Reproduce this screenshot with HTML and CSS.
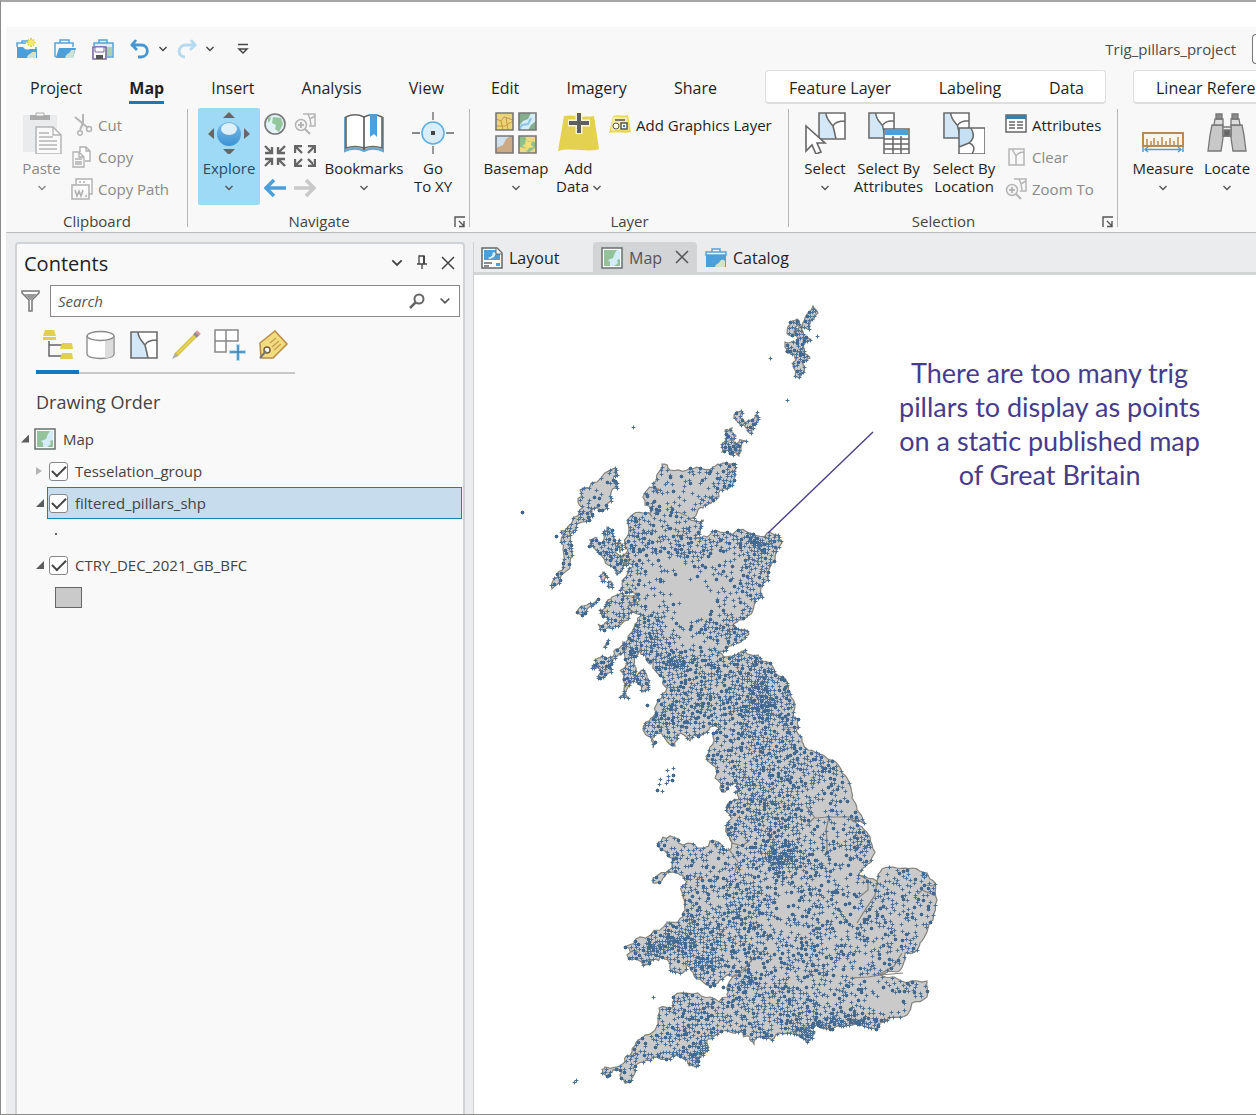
FILE: index.html
```html
<!DOCTYPE html>
<html lang="en">
<head>
<meta charset="utf-8">
<title>Trig_pillars_project</title>
<link rel="stylesheet" href="styles.css">
</head>
<body>
<svg class="defs" aria-hidden="true">
  <symbol id="chev" viewBox="0 0 8 6"><path d="M.5 1l3.500 3.500L7.500 1" fill="none" stroke="currentColor" stroke-width="1.400"/></symbol>
  <symbol id="patch" viewBox="0 0 28 28"><path d="M1 1h26v26H1z" fill="#fff"/><path d="M1 1h7c0 6 4 9 7 13 1 4 2 8 2 13H1z" fill="#d3e7f6"/><path d="M8 1c0 6 4 9 7 13 1 4 2 8 3 13M15 14c2-4 6-5 12-5M1 1h26v26H1z" fill="none" stroke="#6b6b6b" stroke-width="1.600"/></symbol>
  <symbol id="maptile" viewBox="0 0 22 22"><path d="M1 1h20v20H1z" fill="#fff" stroke="#66706c" stroke-width="1.500"/><path d="M3 3h16v16H3z" fill="#94c29a"/><path d="M19 3v9l-3 1 1 3-4 3H9v-4l-2-2 5-2 2-5 2-3z" fill="#d4ecf7"/></symbol>
  <symbol id="case" viewBox="0 0 22 20"><path d="M7 4V1h8v3M1 4h20v3H1z" fill="#eef6fb" stroke="#5aa3d3" stroke-width="1.500"/><path d="M1 7h20v12H1z" fill="#4c9fd8"/><path d="M10 19c1-4 4-3 5-6 2-2 4-1 5 0v6z" fill="#cfe5c6"/></symbol>
  <symbol id="magtile" viewBox="0 0 22 22"><path d="M9 1h12v12h-6M14 1l2 5 5-3M16 6l1 6" fill="none" stroke="#b5b5b5" stroke-width="1.500"/><circle cx="7" cy="12" r="5.500" fill="#f5f5f5" stroke="#b5b5b5" stroke-width="1.500"/><path d="M7 9v6M4 12h6M11 16l5 5" stroke="#b5b5b5" stroke-width="2"/></symbol>
  <symbol id="launch" viewBox="0 0 12 12"><path d="M1 11V1h10M5 5l5 5M10 5v5.500H5" fill="none" stroke="#555" stroke-width="1.400"/></symbol>
  <symbol id="x" viewBox="0 0 14 14"><path d="M1 1l12 12M13 1L1 13" stroke="currentColor" stroke-width="1.500"/></symbol>
</svg>

<div class="app">
  <header class="ribbon">
    <div class="quick">
      <button aria-label="New project"><svg width="22" height="22" viewBox="0 0 22 22"><path d="M6 5V3h6M1 9V5h9M20 9v2" fill="none" stroke="#5aa3d3" stroke-width="1.500"/><path d="M1 9h6c2 3 5 3 7 2h7v9H1z" fill="#4c9fd8"/><path d="M11 20c1-5 3-3 5-6h4v6z" fill="#cfe3d0"/><path d="M15 0v9M10.500 4.500h9M12 1.500l6 6M18 1.500l-6 6" stroke="#dcc940" stroke-width="1.500"/><circle cx="15" cy="4.500" r="2.600" fill="#f3e779"/></svg></button>
      <button aria-label="Open project"><svg width="22" height="22" viewBox="0 0 22 22"><path d="M6 5V2h9v3M1 19V5h18v4" fill="none" stroke="#5aa3d3" stroke-width="1.500"/><path d="M2 19l3-9h17l-3 10H1z" fill="#4c9fd8"/><path d="M11 20c1-5 5-4 6-8h4l-2 8z" fill="#cfe3d0"/></svg></button>
      <button aria-label="Save project"><svg width="22" height="22" viewBox="0 0 22 22"><path d="M7 5V2h8v3M2 8V5h19v14h-6" fill="#dceef8" stroke="#5aa3d3" stroke-width="1.500"/><path d="M14 9h6v9h-6z" fill="#a8cfb6"/><path d="M1 9h13v12H1z" fill="#fff" stroke="#7d68a6" stroke-width="1.600"/><path d="M3 9h9v5H3z" fill="#fff" stroke="#7d68a6"/><path d="M4 17h7v4H4z" fill="#555"/></svg></button>
      <button aria-label="Undo"><svg width="20" height="20" viewBox="0 0 20 20"><path d="M6 1L2 6l5 5M1 6h10c9 0 8 12 0 12H8" fill="none" stroke="#4696d2" stroke-width="2.800"/></svg></button>
      <button class="drop" aria-label="Undo list"><svg width="8" height="6"><use href="#chev"/></svg></button>
      <button aria-label="Redo"><svg width="20" height="20" viewBox="0 0 20 20"><path d="M14 1l4 5-5 5M19 6H9C0 6 0 18 8 18" fill="none" stroke="#b5d9ee" stroke-width="2.800"/></svg></button>
      <button class="drop" aria-label="Redo list"><svg width="8" height="6"><use href="#chev"/></svg></button>
      <button class="custom" aria-label="Customize"><svg width="12" height="12" viewBox="0 0 12 12"><path d="M1 1.500h10M2 6h8l-4 4z" fill="none" stroke="#444" stroke-width="1.500"/></svg></button>
      <span class="project">Trig_pillars_project</span>
      <input class="command" aria-label="Command search">
    </div>

    <nav class="tabs">
      <div class="main-tabs">
        <a href="#">Project</a><a href="#" class="on">Map</a><a href="#">Insert</a><a href="#">Analysis</a><a href="#">View</a><a href="#">Edit</a><a href="#">Imagery</a><a href="#">Share</a>
      </div>
      <div class="context feature"><a href="#">Feature Layer</a><a href="#">Labeling</a><a href="#">Data</a></div>
      <div class="context linear"><a href="#">Linear Referencing</a></div>
    </nav>

    <div class="groups">
      <section class="group clipboard">
        <div class="tools">
          <button class="big off"><svg width="42" height="42" viewBox="0 0 42 42"><path d="M2 3h34v37H2z" fill="#e9ebec"/><path d="M9 3h20v5H9z" fill="#ababab"/><path d="M15 1h8v3h-8z" fill="#fff" stroke="#ababab"/><path d="M15 15h17l8 8v19H15z" fill="#fafafa" stroke="#b5b5b5" stroke-width="1.500"/><path d="M32 15v8h8M18 21h10M18 25h14M18 29h18M18 33h18M18 37h18" fill="none" stroke="#b5b5b5" stroke-width="1.300"/></svg><span>Paste</span><svg width="8" height="6"><use href="#chev"/></svg></button>
          <div class="stack">
            <button class="small off"><svg width="22" height="22" viewBox="0 0 22 22"><path d="M4 3l13 11M12 0v9L9 16" fill="none" stroke="#b5b5b5" stroke-width="2"/><circle cx="18" cy="15" r="2.500" fill="none" stroke="#b5b5b5" stroke-width="1.500"/><circle cx="9" cy="19" r="2.300" fill="none" stroke="#b5b5b5" stroke-width="1.500"/></svg><span>Cut</span></button>
            <button class="small off"><svg width="22" height="22" viewBox="0 0 22 22"><path d="M9 6V1h6l4 4v10h-5" fill="#fff" stroke="#b0b0b0" stroke-width="1.400"/><path d="M2 6h6l5 5v10H2zM8 6v5h5M4 13h7M4 16h7M4 18h7M15 1v4h4" fill="none" stroke="#b0b0b0" stroke-width="1.300"/></svg><span>Copy</span></button>
            <button class="small off"><svg width="22" height="22" viewBox="0 0 22 22"><path d="M5 7V1h16v15h-3" fill="#fff" stroke="#b0b0b0" stroke-width="1.400"/><path d="M1 7h17v14H1zM4 12l2 6 2-5 2 5 2-6M14 18h2M8 4h2M12 4h2" fill="none" stroke="#b0b0b0" stroke-width="1.500"/></svg><span>Copy Path</span></button>
          </div>
        </div>
        <h2>Clipboard</h2>
      </section>

      <section class="group navigate">
        <div class="tools">
          <button class="big explore"><svg width="42" height="42" viewBox="0 0 42 42"><defs><linearGradient id="ball" x2="0" y2="1"><stop stop-color="#79bce8"/><stop offset="1" stop-color="#3c93d4"/></linearGradient></defs><circle cx="21" cy="22" r="12" fill="url(#ball)"/><ellipse cx="21" cy="17" rx="8" ry="6" fill="#dff0fa"/><path d="M21 0l6 6H15zM21 43l6-6H15zM0 22l6-6v11zM42 22l-6-6v11z" fill="#666"/></svg><span>Explore</span><svg width="8" height="6"><use href="#chev"/></svg></button>
          <div class="icons">
            <button aria-label="Full extent"><svg width="22" height="22" viewBox="0 0 22 22"><circle cx="11" cy="11" r="10" fill="#e3f1f8" stroke="#777" stroke-width="1.600"/><path d="M9 4l8 1 2 6-4 8-4-3 1-4-4-2z" fill="#93c69b"/><path d="M4 5l3-1-1 4-2 2z" fill="#93c69b"/></svg></button>
            <button aria-label="Zoom to selection"><svg width="22" height="22"><use href="#magtile"/></svg></button>
            <button aria-label="Fixed zoom in"><svg width="22" height="22" viewBox="0 0 22 22"><path d="M1 1l6 6M8 2v6H1M21 1l-6 6M14 2v6h7M1 21l6-6M8 20v-6H1M21 21l-6-6M14 20v-6h7" fill="none" stroke="#666" stroke-width="2.400"/></svg></button>
            <button aria-label="Fixed zoom out"><svg width="22" height="22" viewBox="0 0 22 22"><path d="M8 8L2 2M1 8V1h7M14 8l6-6M14 1h7v7M8 14l-6 6M1 14v7h7M14 14l6 6M21 14v7h-7" fill="none" stroke="#666" stroke-width="2.400"/></svg></button>
            <button aria-label="Previous extent"><svg width="22" height="20" viewBox="0 0 22 20"><path d="M10 2l-8 8 8 8M2 10h20" fill="none" stroke="#4c9fd8" stroke-width="3.500"/></svg></button>
            <button aria-label="Next extent"><svg width="22" height="20" viewBox="0 0 22 20"><path d="M12 2l8 8-8 8M20 10H0" fill="none" stroke="#c9c9c9" stroke-width="3.500"/></svg></button>
          </div>
          <button class="big bookmarks"><svg width="42" height="42" viewBox="0 0 42 42"><path d="M2 5v34c7-3 13-3 19 0 6-3 12-3 19 0V5" fill="#c5c5c5" stroke="#66a5cc" stroke-width="2"/><path d="M3 5c6-3 12-3 18 0 6-3 12-3 18 0v31c-6-2-12-2-18 0-6-2-12-2-18 0z" fill="#fff" stroke="#666" stroke-width="1.600"/><path d="M21 5v33" stroke="#555" stroke-width="1.600"/><path d="M27 2h7v23l-3-3-4 3z" fill="#4c9fd8"/></svg><span>Bookmarks</span><svg width="8" height="6"><use href="#chev"/></svg></button>
          <button class="big goto"><svg width="42" height="42" viewBox="0 0 42 42"><circle cx="21" cy="21" r="11" fill="#daeefa" stroke="#5fb0e0" stroke-width="1.600"/><path d="M21 0v8M21 34v8M0 21h8M34 21h8" stroke="#666" stroke-width="1.300"/><path d="M19 19h4v4h-4z" fill="#444"/></svg><span>Go<br>To XY</span></button>
        </div>
        <h2>Navigate</h2>
        <button class="launch" aria-label="Navigation options"><svg width="12" height="12"><use href="#launch"/></svg></button>
      </section>

      <section class="group layer">
        <div class="tools">
          <button class="big basemap"><svg width="42" height="42" viewBox="0 0 42 42"><path d="M1 1h17v17H1z" fill="#ead477"/><path d="M1 7l5 2 3-4 9 3M6 9l2 9M11 5l2 13M1 14h9l8-5" fill="none" stroke="#c79a45"/><path d="M24 1h17v17H24z" fill="#d5edf9"/><path d="M24 1h12l-3 6-5 2-4 5zM41 9v9h-8l3-5z" fill="#84ad8d"/><path d="M24 18l3-5 6-1 3-6" fill="none" stroke="#8cc4e6" stroke-width="2"/><path d="M1 24h17v17H1z" fill="#cdaa86"/><path d="M1 24h15l-5 3-3 6-7 3z" fill="#cfe1ef"/><path d="M24 24h17v17H24z" fill="#f1d780"/><path d="M24 24h6l2 5 9 1v5l-8 6-3-5-6-1z" fill="#8ec08e"/><path d="M31 27l2 3 4-1-1 4 3 2-5 1-2 3-2-4-3-1 3-2z" fill="#f3df75"/><path d="M1 1h17v17H1zM24 1h17v17H24zM1 24h17v17H1zM24 24h17v17H24z" fill="none" stroke="#777" stroke-width="1.600"/></svg><span>Basemap</span><svg width="8" height="6"><use href="#chev"/></svg></button>
          <button class="big adddata"><svg width="42" height="42" viewBox="0 0 42 42"><path d="M6 4c10-2 20 2 30 0l5 33c-10 4-27-2-41 2z" fill="#e5d150"/><path d="M21 0v22M10 11h22" stroke="#f8f4d5" stroke-width="7"/><path d="M21 1v20M11 11h20" stroke="#5f5f5f" stroke-width="4"/></svg><span>Add<br>Data <svg width="8" height="6"><use href="#chev"/></svg></span></button>
          <div class="stack">
            <button class="small"><svg width="22" height="22" viewBox="0 0 22 22"><path d="M4 2c6-2 10 1 15-1l3 17c-7 2-14-1-22 1z" fill="#e9d84f"/><path d="M4 3c5-1 10 1 14 0l2 13c-6 1-12-1-18 1z" fill="#f5eda6"/><path d="M6 6h10" stroke="#555" stroke-width="1.500"/><circle cx="7" cy="12" r="3" fill="#fff" stroke="#555"/><path d="M12 9h6v6h-6z" fill="#fff" stroke="#555" stroke-width="1.500"/><path d="M14 11h2v2h-2z" fill="#357fb2"/></svg><span>Add Graphics Layer</span></button>
          </div>
        </div>
        <h2>Layer</h2>
      </section>

      <section class="group selection">
        <div class="tools">
          <button class="big select"><svg width="42" height="42" viewBox="0 0 42 42"><use href="#patch" x="14" width="28" height="28"/><path d="M2 14v25l6-6 4 9 5-2-4-9h8z" fill="#fff" stroke="#666" stroke-width="1.600"/></svg><span>Select</span><svg width="8" height="6"><use href="#chev"/></svg></button>
          <button class="big byattr"><svg width="42" height="42" viewBox="0 0 42 42"><use href="#patch" width="27" height="27"/><path d="M16 17h25v25H16z" fill="#fff" stroke="#666" stroke-width="1.500"/><path d="M17 18h23v5H17z" fill="#4c9fd8"/><path d="M16 27h25M16 32h25M16 37h25M25 24v18M33 24v18" stroke="#666" stroke-width="1.500"/></svg><span>Select By<br>Attributes</span></button>
          <button class="big byloc"><svg width="42" height="42" viewBox="0 0 42 42"><use href="#patch" width="27" height="27"/><path d="M16 16h26v26H16z" fill="#fff"/><path d="M16 16h12c4 7 2 12-2 15l-10 3z" fill="#c5e0f3"/><path d="M28 16c4 7 2 12-2 15 4 1 7 5 3 11M16 35l10-4M16 16h26v26H16z" fill="none" stroke="#666" stroke-width="1.500"/></svg><span>Select By<br>Location</span></button>
          <div class="stack">
            <button class="small"><svg width="22" height="22" viewBox="0 0 22 22"><path d="M1 1h20v17H1z" fill="#fff" stroke="#666" stroke-width="1.500"/><path d="M1 1h20v4H1z" fill="#3b7fa6"/><path d="M4 8h6M4 11h6M4 14h6M12 8h6M12 11h6M12 14h6" stroke="#666" stroke-width="1.500"/></svg><span>Attributes</span></button>
            <button class="small off"><svg width="22" height="22" viewBox="0 0 22 22"><path d="M4 3h15v16H4zM7 3l4 7v9M11 10c2-3 4-4 8-4" fill="none" stroke="#b5b5b5" stroke-width="1.500"/></svg><span>Clear</span></button>
            <button class="small off"><svg width="22" height="22"><use href="#magtile"/></svg><span>Zoom To</span></button>
          </div>
        </div>
        <h2>Selection</h2>
        <button class="launch" aria-label="Selection options"><svg width="12" height="12"><use href="#launch"/></svg></button>
      </section>

      <section class="group inquiry">
        <div class="tools">
          <button class="big measure"><svg width="42" height="42" viewBox="0 0 42 42"><path d="M1 21h40v13H1z" fill="#fbf4ea" stroke="#b98a4c" stroke-width="2"/><path d="M5 33v-6M9 33v-4M12 33v-7M16 33v-4M20 33v-8M24 33v-4M28 33v-7M32 33v-4M36 33v-8" stroke="#b98a4c" stroke-width="1.500"/><path d="M1 35v5M41 35v5M3 37.500h36M6 35l-3 2.500L6 40M36 35l3 2.500-3 2.500" fill="none" stroke="#4c9fd8" stroke-width="1.500"/></svg><span>Measure</span><svg width="8" height="6"><use href="#chev"/></svg></button>
          <button class="big locate"><svg width="42" height="42" viewBox="0 0 42 42"><g fill="#c8c8c8" stroke="#777" stroke-width="1.300"><path d="M6 13h11v13l-2 13H2l2-16zM25 13h11l2 10 2 16H27l-2-13z"/><path d="M9 7h8v6H8zM25 7h8l1 6h-9z" fill="#ddd"/><path d="M10 2h6v5h-6zM26 2h6v5h-6z" fill="#8b8b8b"/><path d="M17 15h8v9h-8z" fill="#eee"/><path d="M18 18h6v6h-6z" fill="#666"/></g></svg><span>Locate</span><svg width="8" height="6"><use href="#chev"/></svg></button>
        </div>
      </section>
    </div>
  </header>

  <main class="work">
    <aside class="contents">
      <div class="title"><h1>Contents</h1>
        <button aria-label="Menu"><svg width="12" height="8"><use href="#chev"/></svg></button>
        <button aria-label="Auto hide"><svg width="12" height="16" viewBox="0 0 12 16"><path d="M3 9V1h5v8M1 9h10M6 9v5" fill="none" stroke="#444" stroke-width="1.300"/><path d="M7 1h2v8H7z" fill="#444"/></svg></button>
        <button aria-label="Close"><svg width="14" height="14"><use href="#x"/></svg></button>
      </div>
      <div class="find">
        <svg width="20" height="24" viewBox="0 0 20 24"><path d="M1 2h17v2l-7 7v11H8V11L1 4z" fill="#fff" stroke="#777" stroke-width="1.500"/><path d="M3 5h13l-6 6H9z" fill="#999"/></svg>
        <div class="box">
          <input type="text" placeholder="Search" aria-label="Search contents">
          <button aria-label="Search"><svg width="18" height="17" viewBox="0 0 18 17"><circle cx="11" cy="6" r="4.500" fill="none" stroke="#666" stroke-width="2"/><path d="M8 9l-6 6" stroke="#666" stroke-width="2.500"/></svg></button>
          <button aria-label="Search options"><svg width="10" height="8"><use href="#chev"/></svg></button>
        </div>
      </div>
      <div class="views">
        <button class="on" aria-label="List by drawing order"><svg width="32" height="32" viewBox="0 0 32 32"><path d="M7 12v15h13M7 16h13" fill="none" stroke="#666" stroke-width="1.500"/><path d="M3 1h9l2 6H1zM1 8h13v3H1zM20 14h10l1 6H18zM20 24h10l1 6H18z" fill="#e2cf4e"/></svg></button>
        <button aria-label="List by data source"><svg width="32" height="32" viewBox="0 0 32 32"><path d="M2 7v18c0 6 27 6 27 0V7" fill="#fff" stroke="#888" stroke-width="1.300"/><path d="M20 11v18c5 0 8-2 8-4V8z" fill="#dcdcdc"/><ellipse cx="15.500" cy="7" rx="13.500" ry="4.500" fill="#fff" stroke="#888" stroke-width="1.300"/></svg></button>
        <button aria-label="List by selection"><svg width="28" height="30"><use href="#patch"/></svg></button>
        <button aria-label="List by editing"><svg width="32" height="32" viewBox="0 0 32 32"><path d="M5 26L25 6" stroke="#cbb63e" stroke-width="4"/><path d="M6 25L24 7" stroke="#e4d154" stroke-width="2.500"/><path d="M1 30l3-6 3 3z" fill="#aaa"/><path d="M24 7l3-3" stroke="#8a8a9a" stroke-width="5"/><path d="M26 5l2-2" stroke="#dc9a93" stroke-width="5"/></svg></button>
        <button aria-label="List by snapping"><svg width="32" height="32" viewBox="0 0 32 32"><path d="M1 1h23v11H1zM1 12h11v11H1zM12 1v11" fill="#fff" stroke="#888" stroke-width="1.500"/><path d="M24 15v17M15 23h17" stroke="#b4def4" stroke-width="4"/><path d="M24 16v15M16 23h15" stroke="#3a7eae" stroke-width="1.500"/></svg></button>
        <button aria-label="List by labeling"><svg width="32" height="32" viewBox="0 0 32 32"><path d="M3 14L18 2l12 13-14 14H4z" fill="#f3dc80" stroke="#b78b45" stroke-width="1.500"/><path d="M13 14l6-5M15 18l7-6M17 21l7-6" stroke="#c69f55" stroke-width="1.500"/><circle cx="10" cy="21" r="3" fill="#fff" stroke="#7b5d35" stroke-width="1.500"/><path d="M9 22l-6 7" stroke="#777" stroke-width="2"/></svg></button>
      </div>
      <h3>Drawing Order</h3>
      <div class="tree">
        <div class="row root"><i class="open"></i><svg width="22" height="22"><use href="#maptile"/></svg><span>Map</span></div>
        <div class="row"><i class="closed"></i><label><input type="checkbox" checked>Tesselation_group</label></div>
        <div class="row chosen"><i class="open"></i><label><input type="checkbox" checked>filtered_pillars_shp</label></div>
        <div class="row symbol"><b class="point"></b></div>
        <div class="row"><i class="open"></i><label><input type="checkbox" checked>CTRY_DEC_2021_GB_BFC</label></div>
        <div class="row symbol"><b class="fill"></b></div>
      </div>
    </aside>

    <section class="view">
      <div class="docs">
        <a href="#" class="layout"><svg width="22" height="22" viewBox="0 0 22 22"><path d="M1 1h15l5 5v15H1z" fill="#fff" stroke="#666" stroke-width="1.500"/><path d="M3 3h12l4 4v6H3z" fill="#4c9fd8"/><path d="M7 11l4-2 1-4 3 1-2 4-4 2z" fill="#e1f1fa"/><path d="M15 1v6h6" fill="#fff" stroke="#666"/><path d="M3 16h8M3 19h5" stroke="#666" stroke-width="1.500"/><path d="M15 16h4v3h-4z" fill="#4c9fd8"/></svg>Layout</a>
        <div class="doc on"><a href="#"><svg width="22" height="22"><use href="#maptile"/></svg>Map</a><button aria-label="Close map"><svg width="14" height="14"><use href="#x"/></svg></button></div>
        <a href="#" class="catalog"><svg width="22" height="20"><use href="#case"/></svg>Catalog</a>
      </div>
      <div class="canvas">
        <svg class="map" width="782" height="838" viewBox="474 275 782 838" role="img" aria-label="Trig pillars in Great Britain">
          <path id="land" fill="#cacaca" stroke="#85827a" stroke-width="1.200"/>
          <path id="rivers" fill="none" stroke="#85827a" stroke-width="1.200"/>
          <path id="arms" fill="none" stroke="#5d7fa3" stroke-opacity="0.45" stroke-width="1"/>
          <path id="pillars" fill="none" stroke="#4b7199" stroke-width="1"/>
          <path id="knots" fill="#41698f"/>
          <path d="M873 432L768 533" stroke="#4a3f8c" stroke-width="1.400"/>
        </svg>
        <p class="note">There are too many trig<br>pillars to display as points<br>on a static published map<br>of Great Britain</p>
      </div>
    </section>
  </main>
</div>
<script src="map.js"></script>
</body>
</html>
```
FILE: styles.css
```css
* { box-sizing: border-box; }
body { margin: 0; background: #fff; color: #1f1f1f; font: 16px/18px "Open Sans", "Noto Sans", sans-serif; overflow-x: hidden; }
h1, h2, h3, p { margin: 0; font-weight: 400; }
a { color: inherit; text-decoration: none; }
button { margin: 0; padding: 0; border: 0; background: none; color: inherit; font: inherit; white-space: nowrap; display: flex; align-items: center; justify-content: center; }
svg { display: block; flex: none; }
.defs { position: absolute; width: 0; height: 0; }

.app { display: flex; flex-direction: column; min-height: 100vh; margin-right: 1px; padding: 25px 0 0 5px; border: solid #8c8c8c; border-width: 2px 0 1px 1px; border-top-color: #a6a6a6; overflow: hidden; }
.ribbon { background: #f8f8f8; border-bottom: 1px solid #bcbcbc; overflow: hidden; }

.quick { display: flex; align-items: center; height: 43px; padding-left: 10px; gap: 16px; color: #444; }
.quick .drop { margin: 0 -6px 0 -7px; }
.quick .custom { margin-left: 13px; }
.project { margin-left: auto; font-size: 15px; color: #4c4c4c; }
.command { width: 4px; height: 30px; padding: 0; border: 1px solid #777; border-right: 0; border-radius: 4px 0 0 4px; background: #fff; }

.tabs { display: flex; height: 34px; margin-bottom: 4px; }
.tabs a { display: flex; align-items: center; height: 34px; padding-top: 5px; border-bottom: 3px solid transparent; white-space: nowrap; }
.tabs .on { font-weight: 700; border-bottom-color: #1a78ba; }
.main-tabs { display: flex; flex: none; justify-content: space-between; width: 711px; padding-left: 24px; margin-right: 48px; }
.context { display: flex; flex: none; align-items: center; justify-content: space-between; background: #fff; border: 1px solid #dedede; border-bottom-width: 2px; border-radius: 4px; }
.feature { width: 341px; padding: 0 21px 0 23px; margin-right: 27px; }
.linear { padding: 0 24px 0 22px; }

.groups { display: flex; height: 124px; font-size: 15px; }
.group { position: relative; display: flex; flex: none; flex-direction: column; }
.group::after { content: ""; position: absolute; right: 0; top: 1px; height: 118px; border-right: 1px solid #b6b6b6; }
.group h2 { padding-top: 7px; font-size: 15px; text-align: center; color: #444; }
.launch { position: absolute; right: 4px; top: 108px; }
.tools { display: flex; height: 97px; }
.big { flex: none; flex-direction: column; justify-content: flex-start; padding-top: 4px; text-align: center; }
.big > span { margin: 5px 0 8px; }
.big span svg { display: inline-block; vertical-align: 1px; }
.big svg, .small svg { color: #555; }
.stack { display: flex; flex-direction: column; padding-top: 1px; }
.small { justify-content: flex-start; height: 32px; gap: 5px; }
.off, .off svg { color: #8a8a8a; }
.clipboard { width: 182px; }
.clipboard .big { width: 51px; margin-left: 10px; }
.clipboard .stack { margin-left: 4px; }
.navigate { width: 282px; }
.navigate .tools { padding-left: 10px; }
.navigate h2, .selection h2 { padding-right: 20px; }
.explore { width: 62px; background: #9edaf5; border-radius: 2px; color: #244d68; }
.icons { display: grid; grid-template-columns: 30px 30px; grid-template-rows: 32px 32px 32px; }
.bookmarks { width: 88px; }
.goto { width: 50px; }
.layer { width: 319px; }
.layer .tools { padding-left: 11px; }
.basemap { width: 70px; }
.adddata { width: 55px; }
.layer .stack { margin-left: 3px; }
.selection { width: 329px; }
.selection .tools { padding-left: 10px; }
.select { width: 52px; }
.byattr { width: 75px; }
.byloc { width: 76px; }
.selection .stack { margin-left: 3px; }
.inquiry { width: 240px; }
.inquiry .tools { padding-left: 13px; }
.measure { width: 64px; }
.locate { width: 64px; }

.work { display: flex; flex: 1; padding-top: 9px; background: #ebeced; }
.contents { flex: none; width: 450px; margin: 0 8px 0 9px; background: #f9f9f9; border: solid #d0d3d5; border-width: 2px 2px 0; border-radius: 4px 4px 0 0; }
.title { display: flex; align-items: center; height: 38px; padding: 0 8px 0 7px; gap: 13px; color: #444; }
.title h1 { flex: 1; padding-top: 2px; font-size: 20px; line-height: 24px; color: #222; }
.find { display: flex; align-items: center; gap: 9px; margin-top: 3px; padding: 0 3px 0 4px; }
.box { display: flex; flex: 1; align-items: center; gap: 14px; height: 32px; padding: 0 9px 0 7px; border: 1px solid #888; background: #fff; color: #555; }
.box input { flex: 1; min-width: 0; padding: 0; border: 0; outline: 0; background: none; font: italic 15px "Open Sans", sans-serif; }
.box input::placeholder { color: #555; }
.views { display: flex; width: 259px; height: 57px; margin-left: 19px; border-bottom: 2px solid #c8c8c8; }
.views button { width: 43px; height: 57px; padding-top: 2px; border-bottom: 4px solid transparent; }
.views .on { border-color: #1378bf; }
h3 { margin: 18px 0 10px 19px; font-size: 18px; line-height: 20px; color: #444; }
.tree { font-size: 15px; color: #444; }
.row { display: flex; align-items: center; height: 32px; padding-left: 19px; }
.root { height: 33px; padding-left: 4px; }
.root span { margin-left: 7px; }
.row i { flex: none; width: 8px; height: 8px; margin-right: 3px; }
.open { background: #5c5c5c; clip-path: polygon(100% 0, 100% 100%, 0 100%); }
.root .open { margin-right: 5px; }
.closed { border: solid transparent; border-width: 4px 2px 4px 6px; border-left-color: #b5b5b5; }
.row label { display: flex; flex: 1; align-items: center; height: 32px; margin-right: 1px; padding-left: 1px; gap: 7px; border: 1px solid transparent; }
.chosen label { background: #c7dded; border-color: #1c80ab; }
.row input { display: flex; align-items: center; justify-content: center; appearance: none; width: 19px; height: 19px; margin: 0; border: 1px solid #888; border-radius: 3px; background: #fff; }
.row input:checked::before { content: ""; width: 12px; height: 6px; border: solid #444; border-width: 0 0 2px 2px; transform: rotate(-45deg) translate(1px, -1px); }
.symbol { height: 30px; padding-left: 38px; }
.point { width: 2px; height: 2px; background: #666; }
.fill { width: 27px; height: 21px; border: 1px solid #666; background: #cacaca; }
.root ~ .symbol:last-child { height: 32px; }

.view { display: flex; flex: 1; flex-direction: column; min-width: 0; border-left: 1px solid #cfd1d3; }
.docs { display: flex; height: 33px; border-bottom: 3px solid #d2d4d6; }
.docs a { display: flex; align-items: center; gap: 6px; padding-top: 1px; }
.docs .layout { width: 119px; padding-left: 7px; }
.doc { display: flex; align-items: center; width: 104px; padding: 0 8px; background: #d2d4d6; border-radius: 4px 4px 0 0; justify-content: space-between; color: #555; }
.docs .catalog { padding-left: 8px; }
.canvas { position: relative; flex: 1; overflow: hidden; background: #fff; }
.note { position: absolute; left: 425px; top: 81px; color: #473b8c; font: 27px/34px Lato, "Open Sans", sans-serif; text-align: center; white-space: nowrap; }
```
FILE: map.js
```js
// Coast polygons in map view coordinates, drawn with a roughened edge.
const coast = [
  // mainland
  '662,464 670,470 687,470 700,468 713,467 723,463 735,464 733,472 734,480 728,488 720,490 713,500 703,508 697,513 688,518 704,520 700,528 695,538 707,537 720,532 733,534 753,534 767,533 778,535 782,543 775,560 768,580 763,597 753,610 742,620 733,625 738,629 749,634 745,639 735,642 727,648 718,653 730,656 738,653 745,650 758,655 770,663 775,673 787,683 791,697 793,713 798,727 802,742 808,750 823,755 833,760 842,773 850,785 852,798 857,810 864,823 850,818 862,827 870,837 875,852 870,863 863,868 859,875 868,878 877,881 882,869 897,868 913,868 927,873 935,883 937,900 933,920 927,932 920,943 915,952 905,953 903,965 897,972 880,975 907,983 927,981 927,997 912,1003 907,1015 893,1017 880,1023 876,1029 857,1024 837,1026 827,1029 817,1025 803,1028 793,1031 780,1033 772,1040 760,1037 754,1044 750,1037 740,1031 730,1032 713,1037 707,1043 703,1055 695,1067 687,1060 673,1056 657,1057 643,1062 633,1068 632,1078 625,1083 622,1072 613,1070 607,1076 602,1073 605,1067 625,1062 632,1052 638,1040 653,1032 658,1020 659,1008 672,1008 673,997 693,994 710,997 728,997 727,987 740,975 745,968 727,975 718,983 703,982 693,972 687,965 685,971 672,971 670,963 663,957 653,960 643,965 632,960 627,955 638,952 625,947 640,937 660,930 678,922 685,910 685,900 682,892 687,882 683,875 673,872 663,878 653,883 658,875 672,868 675,857 663,850 658,843 670,836 683,845 703,848 720,843 730,850 730,840 726,828 732,818 728,813 730,802 738,800 735,792 737,783 728,785 722,792 715,778 707,760 710,747 713,733 720,728 710,727 702,735 690,741 677,735 675,746 665,738 655,733 653,748 643,730 645,723 653,717 658,700 667,688 663,677 655,670 653,660 651,664 646,658 640,652 641,645 637,656 636,668 632,682 628,698 620,697 623,680 627,663 626,645 630,634 635,624 643,615 637,614 628,606 640,600 628,593 620,590 625,578 633,567 623,563 628,550 627,537 628,523 630,517 643,513 652,517 645,505 647,490 660,490 653,483 658,473',
  // Outer Hebrides
  '615,468 617,475 613,480 617,488 611,493 608,503 602,510 592,510 590,518 582,522 575,530 570,534 571,547 570,563 560,580 552,589 558,577 563,567 563,550 564,534 561,531 572,523 583,507 578,502 580,490 597,482',
  // Skye and the small isles
  '607,527 612,530 614,540 615,552 620,556 624,563 630,560 622,570 617,575 615,569 608,565 601,555 595,549 589,546 590,540 597,538 600,543 603,533',
  '619,540 622,545 620,553 617,546', '603,572 607,577 604,581 600,576', '610,581 613,585 609,588',
  // Mull, Tiree and Coll
  '606,604 612,597 622,593 632,596 638,594 636,602 628,606 634,612 628,620 615,626 600,629 598,624 608,621 603,616 600,610',
  '577,612 587,605 598,599 588,608 579,614',
  // Islay, Jura, Colonsay and Arran
  '592,668 595,660 602,656 610,657 616,649 623,642 626,646 618,655 612,662 611,672 605,677 598,678 600,670',
  '604,647 608,640 606,646', '638,674 643,670 647,678 649,687 643,692 638,684',
  // Orkney
  '725,430 732,428 736,436 730,440 738,446 733,455 729,450 722,452 722,444',
  '734,415 741,411 740,418 746,424 756,415 758,419 746,428 739,423', '747,430 753,428 752,433', '735,444 746,441 741,450 739,456',
  // Shetland
  '813,306 818,313 812,319 809,329 802,328 805,318', '787,333 790,325 797,319 799,328 794,336',
  '798,324 794,333 800,338 796,343 785,342 786,352 794,354 796,360 795,376 799,378 802,362 810,358 804,352 805,343 811,340 804,335 800,325',
  // Isle of Wight
  '793,1033 805,1027 815,1033 807,1042 799,1036'
];

const rivers = 'M862,822L850,817L829,817L815,818L811,812L806,806M829,817L826,830L827,840L827,853M814,818L806,826M859,875L868,880L868,890L858,898M877,881L875,895L865,910L857,923M935,886L925,885M936,896L922,890L918,894M903,973L880,975L868,977L850,978M728,848L738,862L735,872M726,828L732,843L742,846L750,840M687,516L678,512M745,968L752,960M798,727L783,728M902,953L894,966L880,974';

let seed = 20211;
function rnd() {
  seed = (seed * 1664525 + 1013904223) >>> 0;
  return seed / 4294967296;
}

// Mid-point displacement gives an uneven shoreline between two vertices.
function roughen(pts, depth) {
  for (let n = 0; n < depth; n++) {
    const out = [];
    pts.forEach((p, i) => {
      const q = pts[(i + 1) % pts.length];
      const dx = q[0] - p[0], dy = q[1] - p[1];
      const east = p[0] > 800;
      const k = Math.hypot(dx, dy) > 3 ? (rnd() - 0.5) * (east ? 0.25 : 0.55) : 0;
      out.push(p, [(p[0] + q[0]) / 2 - dy * k, (p[1] + q[1]) / 2 + dx * k]);
    });
    pts = out;
  }
  return pts;
}

const rings = coast.map(s => roughen(s.split(' ').map(p => p.split(',').map(Number)), 2));
const landD = rings.map(r => 'M' + r.map(p => p.map(v => v.toFixed(1))).join('L') + 'Z').join('');
document.getElementById('land').setAttribute('d', landD);
document.getElementById('rivers').setAttribute('d', rivers);

// Density bumps: x, y, radius x, radius y, strength.
const bumps = [
  [762, 560, 18, 45, 0.5], [740, 540, 38, 10, 0.4], [633, 540, 12, 30, 0.2], [686, 543, 14, 14, 0.4],
  [650, 640, 18, 25, 0.5], [677, 661, 10, 7, 1.2], [725, 628, 24, 10, 0.6], [762, 697, 26, 32, 0.5],
  [735, 670, 45, 12, 0.2], [665, 725, 30, 15, 0.12], [685, 695, 35, 25, 0.18],
  [763, 803, 30, 28, 0.5], [780, 858, 18, 9, 1.1], [768, 745, 22, 30, 0.25], [797, 815, 14, 14, 0.25],
  [770, 835, 16, 20, 0.3], [858, 845, 9, 10, 0.5], [860, 819, 6, 5, 1], [828, 772, 22, 22, 0.1],
  [670, 943, 26, 12, 0.6], [705, 935, 36, 26, 0.4], [703, 965, 14, 10, 0.8], [645, 953, 18, 12, 0.4],
  [757, 905, 18, 26, 0.2], [745, 1025, 55, 14, 0.25], [850, 1022, 38, 6, 1], [748, 981, 9, 4, 1],
  [773, 1003, 16, 12, 0.4], [680, 1057, 18, 8, 0.8], [702, 1050, 7, 14, 0.8], [805, 1034, 12, 9, 1],
  [822, 960, 18, 8, 0.3], [805, 1012, 30, 10, 0.2], [729, 478, 9, 12, 0.4], [690, 1010, 35, 20, 0.12],
  [800, 340, 30, 45, 0.6], [740, 435, 25, 28, 0.6], [583, 513, 12, 14, 0.4], [567, 550, 12, 30, 0.2], [610, 545, 25, 22, 0.4],
  [612, 610, 25, 18, 0.2], [605, 665, 15, 12, 0.3], [634, 685, 16, 14, 0.3],
  [853, 990, 10, 8, 0.2], [690, 605, 34, 38, -0.13], [670, 570, 30, 30, -0.05], [603, 485, 12, 16, -0.08],
  [785, 903, 8, 12, -0.3], [890, 1000, 16, 9, -0.13], [812, 800, 12, 18, -0.12], [755, 968, 16, 6, -0.13],
  [790, 975, 14, 8, -0.08], [742, 835, 10, 18, -0.12], [855, 870, 14, 26, -0.06], [852, 800, 9, 18, -0.12],
  [727, 665, 12, 8, -0.15], [735, 735, 8, 12, -0.1], [840, 970, 12, 10, -0.1], [690, 780, 5, 5, 0]
];
function density(x, y) {
  let d = y < 530 ? 0.09 : y < 650 ? 0.13 : y < 720 ? 0.28 : y < 780 ? 0.22 : 0.16;
  if (x > 820) d = 0.12;
  for (const [bx, by, rx, ry, a] of bumps) {
    d += a * Math.exp(-(((x - bx) / rx) ** 2) - ((y - by) / ry) ** 2);
  }
  return Math.max(d, 0.016);
}

const ctx = document.createElement('canvas').getContext('2d');
const shape = new Path2D(landD);
const used = new Set();
let arms = '', crosses = '', knots = '';
function plot(x, y, gap) {
  if (used.has(x + ',' + y)) return;
  for (let i = -gap; i <= gap; i++) for (let j = -gap; j <= gap; j++) used.add((x + i) + ',' + (y + j));
  arms += `M${x - 2} ${y + 0.5}h5M${x + 0.5} ${y - 2}v5`;
  crosses += `M${x - 1} ${y + 0.5}h3M${x + 0.5} ${y - 1}v3`;
  if (rnd() < 0.25) knots += `M${x - 1} ${y - 1}h3v3h-3z`;
}
for (let n = 0; n < 110000; n++) {
  const x = Math.floor(550 + rnd() * 390), y = Math.floor(300 + rnd() * 786);
  const d = density(x, y);
  if (rnd() < d && ctx.isPointInPath(shape, x, y)) plot(x, y, d > 0.7 || rnd() < 0.3 ? 1 : 2);
}
// Pillars that stand right on the shore, most of them in the west and the isles.
rings.forEach((ring, r) => ring.forEach(([x, y]) => {
  const east = r === 0 && x > 790 && y < 1012;
  if (rnd() < (east ? 0.1 : r ? 0.6 : 0.35)) plot(Math.round(x), Math.round(y), 1);
}));
// Isle of Man and outlying rocks.
[[673, 768], [667, 770], [668, 776], [673, 775], [660, 779], [659, 784], [666, 783], [668, 780], [672, 780], [657, 790], [662, 791],
 [770, 358], [787, 400], [633, 427], [522, 512], [556, 536], [817, 336], [757, 412], [574, 1082], [576, 1080], [653, 997], [647, 705], [723, 987]
].forEach(p => plot(p[0], p[1], 1));

document.getElementById('arms').setAttribute('d', arms);
document.getElementById('pillars').setAttribute('d', crosses);
document.getElementById('knots').setAttribute('d', knots);
```
